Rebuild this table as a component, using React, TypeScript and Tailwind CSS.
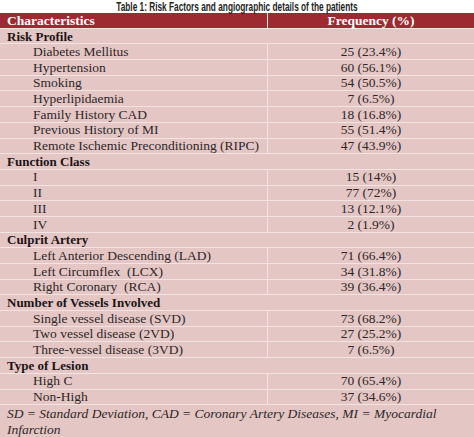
type Row = { label: string; value?: string; section?: boolean };

const rows: Row[] = [
  { label: 'Risk Profile', section: true },
  { label: 'Diabetes Mellitus', value: '25 (23.4%)' },
  { label: 'Hypertension', value: '60 (56.1%)' },
  { label: 'Smoking', value: '54 (50.5%)' },
  { label: 'Hyperlipidaemia', value: '7 (6.5%)' },
  { label: 'Family History CAD', value: '18 (16.8%)' },
  { label: 'Previous History of MI', value: '55 (51.4%)' },
  { label: 'Remote Ischemic Preconditioning (RIPC)', value: '47 (43.9%)' },
  { label: 'Function Class', section: true },
  { label: 'I', value: '15 (14%)' },
  { label: 'II', value: '77 (72%)' },
  { label: 'III', value: '13 (12.1%)' },
  { label: 'IV', value: '2 (1.9%)' },
  { label: 'Culprit Artery', section: true },
  { label: 'Left Anterior Descending (LAD)', value: '71 (66.4%)' },
  { label: 'Left Circumflex  (LCX)', value: '34 (31.8%)' },
  { label: 'Right Coronary  (RCA)', value: '39 (36.4%)' },
  { label: 'Number of Vessels Involved', section: true },
  { label: 'Single vessel disease (SVD)', value: '73 (68.2%)' },
  { label: 'Two vessel disease (2VD)', value: '27 (25.2%)' },
  { label: 'Three-vessel disease (3VD)', value: '7 (6.5%)' },
  { label: 'Type of Lesion', section: true },
  { label: 'High C', value: '70 (65.4%)' },
  { label: 'Non-High', value: '37 (34.6%)' },
];

export default function App() {
  return (
    <div className="w-[474px] h-[437px] bg-white overflow-hidden text-black">
      {/* Caption */}
      <div
        className="h-[13px] flex items-center justify-center text-[12px] font-bold leading-none text-[#1e1e1e]"
        style={{ fontFamily: '"Liberation Sans", Arial, sans-serif' }}
      >
        <span className="inline-block whitespace-nowrap scale-x-[0.69]">
          Table 1: Risk Factors and angiographic details of the patients
        </span>
      </div>

      <div className="bg-[#e4c6c4]" style={{ fontFamily: '"Liberation Serif", "Times New Roman", serif' }}>
        {/* Header */}
        <div className="flex h-[15.7px] bg-[#9d2a31] text-white font-bold text-[13.5px] leading-none border-b border-[#f2e4e3]">
          <div className="w-[268px] flex items-center pl-[7px] border-r border-[#f2e4e3]">Characteristics</div>
          <div className="flex-1 flex items-center justify-center">Frequency (%)</div>
        </div>

        {rows.map((r) =>
          r.section ? (
            <div
              key={r.label}
              className="h-[15.7px] flex items-center pl-[7px] font-bold text-[13px] leading-none text-[#1a1416] border-b border-[#f2e4e3]"
            >
              {r.label}
            </div>
          ) : (
            <div key={r.label} className="flex h-[15.7px] text-[13.5px] leading-none text-[#2e2628] border-b border-[#f2e4e3]">
              <div className="w-[268px] flex items-center pl-[33px] border-r border-[#f2e4e3] whitespace-pre">{r.label}</div>
              <div className="flex-1 flex items-center justify-center">{r.value}</div>
            </div>
          )
        )}

        {/* Footnote */}
        <div className="h-[32px] pl-[7px] pt-[1px] italic text-[13.5px] leading-[15.5px] text-[#2e2628]">
          SD = Standard Deviation, CAD = Coronary Artery Diseases, MI = Myocardial
          <br />
          Infarction
        </div>
      </div>
    </div>
  );
}
